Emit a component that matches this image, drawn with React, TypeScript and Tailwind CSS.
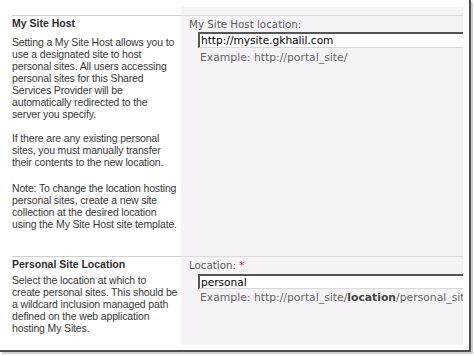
const tahoma = "font-['Liberation_Sans',Arial,sans-serif]"
const verdana = "font-['DejaVu_Sans',Verdana,sans-serif]"

function Lines({ lines }: { lines: string[] }) {
  return (
    <>
      {lines.map((l) => (
        <span key={l} className="block whitespace-nowrap">
          {l}
        </span>
      ))}
    </>
  )
}

export default function App() {
  return (
    <div className="h-[356px] w-[474px] overflow-hidden bg-white">
      <div
        className={`h-[352px] w-[471px] border-b-2 border-r-2 border-[#4e4e4e] pl-[12px] pt-[7px] shadow-[2px_2px_0_#cfcfcf] ${tahoma}`}
      >
        <div className="grid grid-cols-[169px_282px] text-[10.5px] leading-[12px] tracking-[-0.15px] text-[#3a3a3a]">
          {/* spacer row */}
          <div className="h-[8px]" />
          <div className="h-[8px] bg-[#f6f3f6]" />

          {/* My Site Host */}
          <div className="h-[241px] border-t border-[#cfcfcf] pt-px">
            <div className="font-bold tracking-normal text-[#2e2e2e]">My Site Host</div>
            <p className="mt-[7px]">
              <Lines
                lines={[
                  'Setting a My Site Host allows you to',
                  'use a designated site to host',
                  'personal sites. All users accessing',
                  'personal sites for this Shared',
                  'Services Provider will be',
                  'automatically redirected to the',
                  'server you specify.',
                ]}
              />
            </p>
            <p className="mt-[12px]">
              <Lines
                lines={[
                  'If there are any existing personal',
                  'sites, you must manually transfer',
                  'their contents to the new location.',
                ]}
              />
            </p>
            <p className="mt-[14px]">
              <Lines
                lines={[
                  'Note: To change the location hosting',
                  'personal sites, create a new site',
                  'collection at the desired location',
                  'using the My Site Host site template.',
                ]}
              />
            </p>
          </div>
          <div className={`h-[241px] overflow-hidden border-t border-[#dcdcdc] bg-[#f6f3f6] pl-[8px] pt-[2px] tracking-normal ${verdana}`}>
            <div className="whitespace-nowrap text-[10.3px] text-[#5c5c5c]">My Site Host location:</div>
            <div className="ml-[9px] mt-[2px] h-[16px] w-[320px] border-l-2 border-t-2 border-b border-l-[#555] border-t-[#555] border-b-[#d8d8d8] bg-white pl-[1px] text-[10.6px] leading-[12px] text-black">
              http://mysite.gkhalil.com
            </div>
            <div className="ml-[11px] mt-[4px] whitespace-nowrap text-[10.8px] text-[#666]">
              Example: http://portal_site/
            </div>
          </div>

          {/* Personal Site Location */}
          <div className="h-[89px] border-t border-[#cfcfcf] pt-px">
            <div className="font-bold tracking-normal text-[#2e2e2e]">Personal Site Location</div>
            <p className="mt-[4px]">
              <Lines
                lines={[
                  'Select the location at which to',
                  'create personal sites. This should be',
                  'a wildcard inclusion managed path',
                  'defined on the web application',
                  'hosting My Sites.',
                ]}
              />
            </p>
          </div>
          <div className={`h-[89px] overflow-hidden border-t border-[#dcdcdc] bg-[#f6f3f6] pl-[8px] pt-[2px] tracking-normal ${verdana}`}>
            <div className="whitespace-nowrap text-[10.3px] text-[#5c5c5c]">
              Location: <span className="text-[#e0102a]">*</span>
            </div>
            <div className="ml-[9px] mt-[3px] h-[15px] w-[320px] border-l-2 border-t-2 border-b border-l-[#555] border-t-[#555] border-b-[#d8d8d8] bg-white pl-[1px] text-[10.6px] leading-[12px] text-black">
              personal
            </div>
            <div className="ml-[11px] mt-[3px] whitespace-nowrap text-[10.8px] text-[#666]">
              Example: http://portal_site/<b className="text-[#444]">location</b>/personal_site/
            </div>
          </div>
        </div>
      </div>
    </div>
  )
}
